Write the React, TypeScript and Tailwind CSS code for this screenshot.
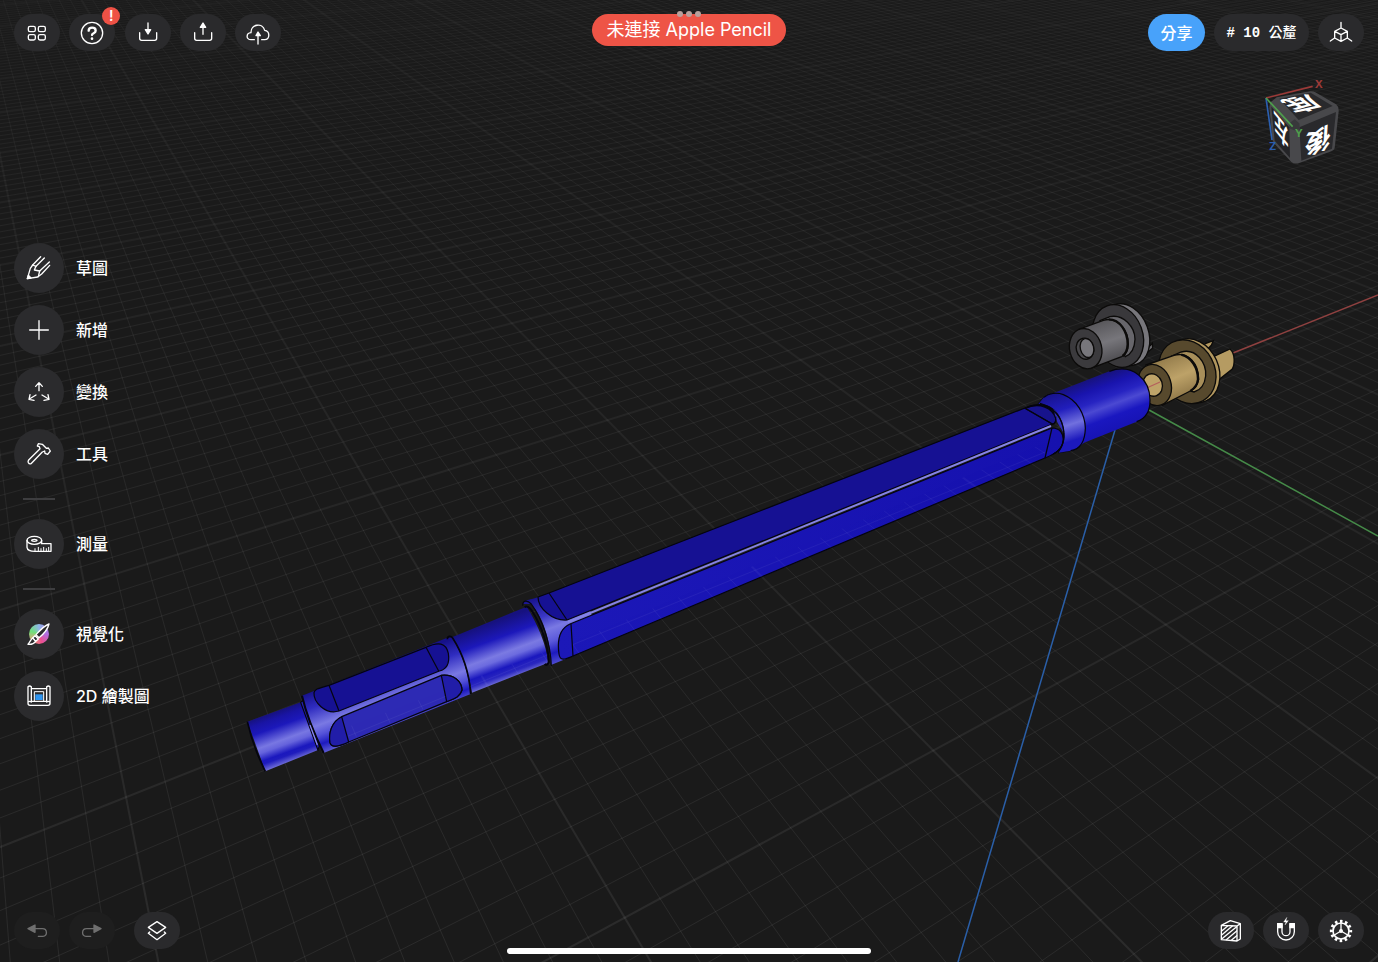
import React from "react";

type Line = { x1: number; y1: number; x2: number; y2: number };

// ground plane -> view. i and j count the major grid lines in each direction
function project(i: number, j: number) {
  const w = 1 + 0.09 * i - 0.1502 * j;
  return { x: (304.5 + 253.5 * i + 12.9 * j) / w, y: (376.7 - 24.3 * i + 42.5 * j) / w };
}

const VANISH_A = { x: -86, y: -283 };
const VANISH_B = { x: 2817, y: -270 };

function ray(from: { x: number; y: number }, to: { x: number; y: number }): Line {
  const dx = to.x - from.x;
  const dy = to.y - from.y;
  const k = 4000 / Math.hypot(dx, dy);
  return { x1: from.x, y1: from.y, x2: from.x + dx * k, y2: from.y + dy * k };
}

const minor: Line[] = [];
const major: Line[] = [];
for (let n = -20; n <= 200; n++) (n % 10 === 0 ? major : minor).push(ray(VANISH_A, project(n / 10, 0)));
for (let n = -150; n <= 45; n++) (n % 10 === 0 ? major : minor).push(ray(VANISH_B, project(0, n / 10)));

function Grid() {
  return (
    <g id="grid" fill="none">
      <g stroke="url(#minorFade)" strokeWidth="1">{minor.map((l, k) => <line key={k} {...l} />)}</g>
      <g stroke="url(#majorFade)" strokeWidth="2">{major.map((l, k) => <line key={k} {...l} />)}</g>
    </g>
  );
}

function Shades() {
  return (
    <defs>
      <linearGradient id="minorFade" gradientUnits="userSpaceOnUse" x1="0" y1="0" x2="0" y2="962">
        <stop offset="0" stopColor="#fff" stopOpacity="0.03" />
        <stop offset="0.3" stopColor="#fff" stopOpacity="0.055" />
        <stop offset="1" stopColor="#fff" stopOpacity="0.07" />
      </linearGradient>
      <linearGradient id="majorFade" gradientUnits="userSpaceOnUse" x1="0" y1="0" x2="0" y2="962">
        <stop offset="0" stopColor="#fff" stopOpacity="0.03" />
        <stop offset="1" stopColor="#fff" stopOpacity="0.075" />
      </linearGradient>
      <clipPath id="underside">
        <path d="M573 642L1045 443V458L573 656ZM348 727L446 690V700L348 740ZM470 680L548 650V662L470 692Z" />
      </clipPath>
      <linearGradient id="tube" gradientUnits="userSpaceOnUse" x1="52" y1="485" x2="106" y2="634">
        <stop offset="0" stopColor="#16117f" />
        <stop offset="0.12" stopColor="#1914a4" />
        <stop offset="0.28" stopColor="#1c18bb" />
        <stop offset="0.55" stopColor="#7877e2" />
        <stop offset="0.65" stopColor="#6563dc" />
        <stop offset="0.8" stopColor="#1b18be" />
        <stop offset="0.86" stopColor="#1f1cbd" />
        <stop offset="1" stopColor="#7472d8" />
      </linearGradient>
      <linearGradient id="grip" gradientUnits="userSpaceOnUse" x1="216" y1="405" x2="281" y2="579">
        <stop offset="0" stopColor="#16118a" />
        <stop offset="0.25" stopColor="#2f2cc0" />
        <stop offset="0.55" stopColor="#7a79e3" />
        <stop offset="0.7" stopColor="#5452d8" />
        <stop offset="0.85" stopColor="#1d1abf" />
        <stop offset="1" stopColor="#5d5bd3" />
      </linearGradient>
      <linearGradient id="neck" gradientUnits="userSpaceOnUse" x1="666" y1="232" x2="727" y2="398">
        <stop offset="0" stopColor="#16117f" />
        <stop offset="0.28" stopColor="#1c18bb" />
        <stop offset="0.55" stopColor="#7b7ae2" />
        <stop offset="0.64" stopColor="#6c6bdf" />
        <stop offset="0.79" stopColor="#1b18be" />
        <stop offset="0.9" stopColor="#2b28c0" />
        <stop offset="1" stopColor="#6f6dd6" />
      </linearGradient>
      <linearGradient id="neckRing" gradientUnits="userSpaceOnUse" x1="527" y1="600" x2="551" y2="665">
        <stop offset="0" stopColor="#17128c" />
        <stop offset="0.3" stopColor="#3936c4" />
        <stop offset="0.5" stopColor="#7a79e3" />
        <stop offset="0.68" stopColor="#5b59da" />
        <stop offset="0.85" stopColor="#1d1abf" />
        <stop offset="1" stopColor="#4d4bd0" />
      </linearGradient>
      <linearGradient id="cone" gradientUnits="userSpaceOnUse" x1="95" y1="312" x2="150" y2="483">
        <stop offset="0" stopColor="#17128c" />
        <stop offset="0.3" stopColor="#211ebd" />
        <stop offset="0.58" stopColor="#7170de" />
        <stop offset="0.85" stopColor="#1c19bd" />
        <stop offset="1" stopColor="#1c19bd" />
      </linearGradient>
      <linearGradient id="cap" gradientUnits="userSpaceOnUse" x1="210" y1="268" x2="270" y2="428">
        <stop offset="0" stopColor="#17127f" />
        <stop offset="0.2" stopColor="#1914ae" />
        <stop offset="0.4" stopColor="#2724c2" />
        <stop offset="0.55" stopColor="#4b49d2" />
        <stop offset="0.75" stopColor="#1a17c0" />
        <stop offset="1" stopColor="#1713b4" />
      </linearGradient>
      <linearGradient id="lowerFlat" gradientUnits="userSpaceOnUse" x1="560" y1="650" x2="1060" y2="440">
        <stop offset="0" stopColor="#1c18b8" />
        <stop offset="1" stopColor="#1611ae" />
      </linearGradient>
      <linearGradient id="steel" gradientUnits="userSpaceOnUse" x1="225" y1="100" x2="265" y2="220">
        <stop offset="0" stopColor="#58575b" />
        <stop offset="0.5" stopColor="#77767b" />
        <stop offset="1" stopColor="#4d4c50" />
      </linearGradient>
      <linearGradient id="brass" gradientUnits="userSpaceOnUse" x1="425" y1="210" x2="475" y2="330">
        <stop offset="0" stopColor="#967e4d" />
        <stop offset="0.5" stopColor="#bda268" />
        <stop offset="1" stopColor="#8f7748" />
      </linearGradient>
    </defs>
  );
}

function Pen() {
  return (
    <g stroke="#05050f" strokeLinejoin="round">
      <g transform="translate(230 560) scale(.33333)" strokeWidth="3.6">
        <path d="M52 485L212 427L266 569L106 634Z" fill="url(#tube)" stroke="none" />
        <path d="M52 485C62 530 84 590 106 634" fill="none" strokeWidth="5" />
        <path d="M212 427L222 420L268 558L264 571Z" fill="#2421b4" />
        <path d="M216 407L652 233L666 232C694 275 716 340 722 402L281 579C252 520 230 455 216 407Z" fill="url(#grip)" stroke="none" />
        <path d="M216 407C228 460 252 520 281 579" fill="none" strokeWidth="6" />
        <path d="M240 495L262 555" stroke="#8d8bea" fill="none" />
        <path d="M297 376L588 262C625 244 648 248 655 280C660 312 648 328 628 333L327 453C285 465 250 425 252 398C254 386 270 384 297 376Z" fill="#161193" />
        <path d="M297 376L327 453M588 262L626 333" fill="none" />
        <path d="M335 470L634 346C672 342 695 364 696 390C690 412 670 417 650 425L356 546C325 560 304 564 300 548C295 520 305 485 335 470Z" fill="#2d2ab4" />
        <path d="M335 470C305 485 295 520 300 548C304 564 325 560 356 546ZM634 346C672 342 695 364 696 390C690 412 670 417 650 425Z" fill="#211da8" />
        <path d="M666 232L890 140C925 195 950 260 955 308L726 398C716 335 694 275 666 232Z" fill="url(#neck)" stroke="none" />
        <path d="M652 238C652 228 662 226 668 234C696 278 718 340 722 402" fill="none" strokeWidth="5" />
      </g>
      {/* shoulder behind the long flats */}
      <path d="M523 604C524 600 528 600 532 599L549 594L590 610L600 640L573 656L551 665C551 640 542 615 531 604Z" fill="url(#neckRing)" stroke="none" />
      <g transform="translate(230 560) scale(.33333)" strokeWidth="3.6">
        <path d="M878 137C878 120 892 120 904 132C936 176 962 250 964 318" fill="none" />
        <path d="M884 142C890 136 900 142 908 156C936 200 955 260 956 305C955 315 948 316 944 312" fill="none" strokeWidth="6" />
      </g>
      <path d="M549 593L1025 408C1036 402 1050 406 1055 414C1056 419 1055 423 1050 425L567 620C552 621 538 608 538 597Z" fill="#161193" strokeWidth="1.2" />
      <path d="M549 593L567 620" fill="none" strokeWidth="1.2" />
      <path d="M570 624L1052 428C1060 428 1064 434 1063 441C1062 449 1057 453 1045 458L573 656C564 660 560 661 559 654C557 640 559 629 570 624Z" fill="url(#lowerFlat)" strokeWidth="1.2" />
      <path d="M571 624L573 656M1052 428L1045 458" fill="none" strokeWidth="1.2" />
      <path d="M568 622L1051 426" stroke="#8583e6" strokeWidth="2" />
      <g transform="translate(1020 290) scale(.33333)" strokeWidth="3.6">
        <path d="M55 342L72 322C85 310 110 306 130 314C170 330 195 370 196 415C195 455 180 478 152 482L116 488C130 470 136 448 132 420C125 370 95 340 55 342Z" fill="url(#cone)" />
        <path d="M15 355C60 335 98 355 107 385C108 395 106 400 97 402Z" fill="#17138c" />
        <path d="M107 382C112 404 122 410 132 432C132 404 122 378 100 356Z" fill="#302db8" stroke="none" />
        <path d="M97 402L15 355M97 404C108 400 108 392 107 380M20 352C80 325 128 370 132 428C134 462 120 482 100 492" fill="none" />
        <path d="M84 316C92 310 110 306 130 314C170 330 195 370 196 415C195 440 190 455 180 468L192 458L350 395C370 388 391 372 390 330C390 270 340 218 268 244Z" fill="url(#cap)" stroke="none" />
        <path d="M72 322C85 310 110 306 130 314C170 330 195 370 196 415C195 455 180 478 152 482L116 488C130 470 136 448 132 420C125 370 95 340 55 342Z" fill="url(#cone)" stroke="none" />
        <path d="M268 244C340 218 390 270 390 330C391 372 370 388 350 395M72 322C85 310 110 306 130 314C170 330 195 370 196 415C195 455 180 478 152 482M132 428C134 462 120 482 100 492M60 340C98 350 128 380 132 428" fill="none" />
      </g>
      {/* grid showing through where the body dips under the plane */}
      <g clipPath="url(#underside)" stroke="none" opacity="0.8"><use href="#grid" /></g>
    </g>
  );
}

function Couplers() {
  return (
    <g transform="translate(1020 290) scale(.33333)" stroke="#0c0b0a" strokeWidth="4">
      {/* steel */}
      <path d="M378 180L397 160L398 174L385 185Z" fill="#6d6c70" />
      <ellipse cx="316" cy="134" rx="70" ry="95" transform="rotate(-20 316 134)" fill="#77767b" />
      <ellipse cx="294" cy="138" rx="74" ry="96" transform="rotate(-20 294 138)" fill="#39383b" />
      <path d="M240 92L270 80C310 72 345 110 345 148C344 176 335 192 316 200Z" fill="#67666b" />
      <path d="M176 118L250 91C292 78 325 120 325 163C324 184 316 195 305 200L212 235Z" fill="url(#steel)" />
      <path d="M266 88C300 88 323 125 323 163C322 184 316 192 308 198" fill="none" strokeWidth="7" />
      <ellipse cx="197" cy="176" rx="48" ry="61" transform="rotate(-14 197 176)" fill="#3b3a3d" />
      <ellipse cx="195" cy="176" rx="26" ry="32" transform="rotate(-14 195 176)" fill="#48474a" />
      <ellipse cx="201" cy="174" rx="20" ry="29" transform="rotate(-14 201 174)" fill="#77767b" />
      {/* brass */}
      <path d="M546 166L558 160L580 152L574 166L560 180Z" fill="#b3985f" />
      <path d="M580 200L630 177C646 190 645 225 636 238L598 268Z" fill="#b59b62" />
      <ellipse cx="518" cy="242" rx="78" ry="99" transform="rotate(-24 518 242)" fill="#b0965e" />
      <ellipse cx="502" cy="245" rx="82" ry="99" transform="rotate(-28 502 245)" fill="#57492d" />
      <path d="M455 198L484 186C528 174 560 218 557 258C554 286 544 300 522 306L500 300Z" fill="#a88f5a" />
      <path d="M378 225L462 196C505 184 536 222 536 268C532 290 522 298 505 306L428 345Z" fill="url(#brass)" />
      <path d="M484 194C514 202 534 232 534 268C532 286 526 294 512 302" fill="none" strokeWidth="7" />
      <ellipse cx="404" cy="285" rx="49" ry="63" transform="rotate(-18 404 285)" fill="#57492d" />
      <ellipse cx="398" cy="285" rx="29" ry="34" transform="rotate(-18 398 285)" fill="#bfa469" />
      <path d="M380 294L420 276" stroke="#b5605c" />
    </g>
  );
}

function Scene() {
  return (
    <svg className="absolute inset-0 h-full w-full" viewBox="0 0 1378 962" preserveAspectRatio="xMidYMid slice" aria-hidden="true">
      <Shades />
      <Grid />
      <g strokeWidth="1.5" fill="none">
        <path d="M1233 353L1378 295" stroke="#8f4140" />
        <path d="M1149 410L1378 536" stroke="#458a48" />
        <path d="M1115 430L958 962" stroke="#2a5fa8" />
      </g>
      <Couplers />
      <Pen />
    </svg>
  );
}

function ViewCube() {
  return (
    <svg className="h-[90px] w-[80px] overflow-visible" viewBox="390 230 240 270" role="img" aria-label="視角方塊">
      <path d="M420 310L440 294L540 276Q548 274 556 279L618 315Q627 322 626 336L614 446Q612 453 604 456L510 490Q494 496 484 488L434 434Q428 426 427 418L418 325Z" fill="#48484b" />
      <path d="M448 298L542 280L608 320L506 362Z" fill="#29292c" />
      <path d="M424 322L478 384L480 476L434 424Z" fill="#242427" />
      <path d="M508 384L618 338L606 448L514 484Z" fill="#29292c" />
      <path d="M478 372L494 360L508 372L510 388L498 394L480 388Z" fill="#38383b" />
      <g fill="#fff" className="font-['Noto_Sans_CJK_TC',sans-serif]" fontSize="84" fontWeight="700">
        <text transform="matrix(-.94 .4 .06 -.98 600 448)" x="0" y="72">後</text>
        <text transform="matrix(-.52 -.64 -.06 -.98 478 462)" x="0" y="74">左</text>
        <text transform="matrix(-1.1 .24 -.72 -.54 590 324)" x="0" y="70">底</text>
      </g>
      <g strokeWidth="5" fill="none">
        <path d="M408 296L548 261" stroke="#9c3a38" />
        <path d="M408 296L426 422" stroke="#2b5fb0" />
        <path d="M408 296L488 382" stroke="#4f9e4c" />
      </g>
      <g className="font-['Inter',sans-serif]" fontSize="33" fontWeight="700">
        <text x="554" y="267" fill="#9c3a38">X</text>
        <text x="494" y="413" fill="#4f9e4c">Y</text>
        <text x="417" y="451" fill="#2b5fb0">Z</text>
      </g>
    </svg>
  );
}

function Icon({ children, w = 4 }: { children: React.ReactNode; w?: number }) {
  return (
    <svg className="relative h-6 w-6 overflow-visible" viewBox="0 0 72 72" fill="none" stroke="currentColor" strokeWidth={w} strokeLinecap="round" strokeLinejoin="round" aria-hidden="true">
      {children}
    </svg>
  );
}

const GridIcon = () => (
  <Icon>
    <rect x="10" y="16" width="21" height="16" rx="5" /><rect x="40" y="16" width="21" height="16" rx="5" />
    <rect x="10" y="41" width="21" height="16" rx="5" /><rect x="40" y="41" width="21" height="16" rx="5" />
  </Icon>
);
const HelpIcon = () => (
  <Icon>
    <circle cx="36" cy="36" r="32" />
    <path d="M26 29C26 17 47 17 47 29C47 37 36 36 36 42" strokeWidth="7" /><circle cx="36" cy="53" r="4" fill="currentColor" stroke="none" />
  </Icon>
);
const TRAY = "M11 35V52Q11 58 17 58H56Q62 58 62 52V35";
const ImportIcon = () => <Icon><path d={TRAY} /><path d="M36 6V28" /><path d="M28 26H44L36 39Z" fill="currentColor" /></Icon>;
const ExportIcon = () => <Icon><path d={TRAY} /><path d="M36 20V40" /><path d="M28 19H44L36 6Z" fill="currentColor" /></Icon>;
const CloudIcon = () => (
  <Icon>
    <path d="M25 56H15C-1 56 0 36 15 35C14 9 50 4 56 28C73 30 72 56 56 56H47" />
    <path d="M36 44V69" /><path d="M30 44H43L36 33Z" fill="currentColor" />
  </Icon>
);
const AxesIcon = () => (
  <Icon>
    <path d="M36 21L55 31V51L36 61L17 51V31ZM17 31L36 41L55 31M36 41V61M36 21V4M17 51L4 60M55 51L68 60" />
  </Icon>
);
const PencilIcon = () => (
  <Icon>
    <path d="M41 2L17 27L10 37L1 68L32 63L44 54L68 28" /><path d="M52 6L27 31L22 42L38 45L34 62" /><path d="M67 18L38 45M17 27L27 31" />
    <path d="M1 68L4 58L12 66Z" fill="currentColor" />
  </Icon>
);
const PlusIcon = () => <Icon><path d="M36 8V64M8 36H64" /></Icon>;
const TransformIcon = () => (
  <Icon>
    <path d="M36 9V32M26 19L36 8L46 19M27 45L7 57M9 44L6 58L21 61M45 45L65 57M63 44L66 58L51 61" />
  </Icon>
);
const HammerIcon = () => (
  <Icon><path d="M31 12L34 5L46 7L58 19L64 18L70 27L62 37L54 34L53 27L46 30L12 65Q7 67 4 62Q2 58 5 54L39 20L37 14Z" /></Icon>
);
const TapeIcon = () => (
  <Icon>
    <ellipse cx="22" cy="25" rx="22" ry="12" /><ellipse cx="22" cy="25" rx="8" ry="3" />
    <path d="M0 25V46C1 54 12 58 24 58H72V35H43M44 25V35" /><path d="M24 57V50M34 57V46M42 57V50M50 57V46M58 57V50M65 57V46" strokeWidth="3" />
  </Icon>
);
const BrushIcon = () => (
  <>
    <span className="absolute h-5 w-5 rounded-full bg-[conic-gradient(#8fb4e8,#b06be0_25%,#ee4f8e_45%,#e8a07a_62%,#6fe07a_80%,#8fb4e8)]" />
    <Icon>
      <path d="M66 6C56 9 38 26 27 38L36 47C50 36 63 19 66 6Z" fill="#2b2b2d" />
      <path d="M24 41L34 51L26 58L17 48Z" fill="#2b2b2d" />
      <path d="M17 48L26 58C20 66 10 68 3 67C9 61 10 53 17 48Z" fill="#2b2b2d" />
    </Icon>
  </>
);
const DrawingIcon = () => (
  <Icon>
    <path d="M3 8Q8 4 13 8V52H59V8Q64 4 69 8V58Q69 64 63 64H9Q3 64 3 58ZM13 14H59M3 54Q8 50 13 54M59 54Q64 50 69 54" />
    <path d="M22 52V23H50V52" strokeWidth="3" /><rect x="25" y="31" width="22" height="17" fill="#2f95f0" stroke="none" />
  </Icon>
);
const UndoIcon = () => <Icon><path d="M30 29H52C68 29 68 52 54 52H40" /><path d="M9 29L30 18V40Z" fill="currentColor" /></Icon>;
const RedoIcon = () => <Icon><path d="M42 29H20C4 29 4 52 18 52H32" /><path d="M63 29L42 18V40Z" fill="currentColor" /></Icon>;
const LayersIcon = () => <Icon><path d="M36 8L62 25L36 43L10 25ZM14 39L10 43L36 62L62 43L58 39" /></Icon>;
const SectionIcon = () => (
  <Icon>
    <path d="M7 19L34 5L64 14V60L54 66L7 62ZM7 19L54 21V66M54 21L64 14" />
    <path d="M8 36L26 21M8 48L40 21M8 60L53 23M22 62L53 36M38 63L53 50" />
  </Icon>
);
const MagnetIcon = () => (
  <Icon>
    <path d="M11 14H24V38A12 12 0 0 0 48 38V14H61V38A25 25 0 0 1 11 38Z" /><path d="M11 14H24V26H11ZM48 14H61V26H48Z" fill="currentColor" />
    <path d="M38 -4L29 9H36L33 18L43 5H36Z" fill="currentColor" strokeWidth="1" />
  </Icon>
);
const GearIcon = () => (
  <Icon>
    <circle cx="36" cy="36" r="24" strokeWidth="5" /><circle cx="36" cy="36" r="29" strokeWidth="9" strokeLinecap="butt" pathLength="120" strokeDasharray="5 5" strokeDashoffset="2.5" />
    <path d="M36 36V12M36 36L16 48M36 36L56 48" /><circle cx="36" cy="36" r="4" fill="currentColor" />
  </Icon>
);

const PILL = "flex h-[37px] items-center justify-center rounded-full bg-[#2a2a2c] text-white";

function PillButton({ label, disabled, children }: { label: string; disabled?: boolean; children: React.ReactNode }) {
  return (
    <button type="button" aria-label={label} disabled={disabled} className={`${PILL} relative w-[46px] disabled:bg-[#1e1e1e] disabled:text-[#6f6f6f]`}>
      {children}
    </button>
  );
}

const TOOLS: ({ label: string; icon: React.FC } | null)[] = [
  { label: "草圖", icon: PencilIcon },
  { label: "新增", icon: PlusIcon },
  { label: "變換", icon: TransformIcon },
  { label: "工具", icon: HammerIcon },
  null,
  { label: "測量", icon: TapeIcon },
  null,
  { label: "視覺化", icon: BrushIcon },
  { label: "2D 繪製圖", icon: DrawingIcon },
];

function Toolbar() {
  return (
    <nav className="flex flex-col items-start gap-3">
      {TOOLS.map((t, k) =>
        t ? (
          <button key={t.label} type="button" className="flex items-center gap-3 text-base font-medium text-white">
            <span className="relative flex h-[50px] w-[50px] items-center justify-center rounded-full bg-[#2b2b2d]"><t.icon /></span>
            {t.label}
          </button>
        ) : (
          <hr key={k} className="my-[7px] ml-[9px] h-[2px] w-8 border-0 bg-[#3d3d3f]" />
        )
      )}
    </nav>
  );
}

export default function App() {
  return (
    <div lang="zh-Hant" className="relative flex min-h-screen flex-col overflow-hidden bg-[#1a1a1a] font-['Inter','Noto_Sans_CJK_TC',sans-serif]">
      <Scene />
      <header className="relative grid grid-cols-[1fr_auto_1fr] items-start px-[14px] pt-[14px]">
        <div className="flex w-[267px] justify-between">
          <PillButton label="設計"><GridIcon /></PillButton>
          <PillButton label="說明">
            <HelpIcon />
            <span className="absolute -right-[5px] -top-[7px] flex h-[18px] w-[18px] items-center justify-center rounded-full bg-[#ee5145] text-sm font-semibold">!</span>
          </PillButton>
          <PillButton label="匯入"><ImportIcon /></PillButton>
          <PillButton label="匯出"><ExportIcon /></PillButton>
          <PillButton label="同步"><CloudIcon /></PillButton>
        </div>
        <div className="relative flex h-8 items-center rounded-full bg-[#ee5446] px-[15px] text-lg text-white" role="status">
          未連接 Apple Pencil
          <span className="absolute inset-x-0 -top-[3px] flex justify-center gap-[3px]">
            <i className="h-[6px] w-[6px] rounded-full bg-[#b9a09c]" /><i className="h-[6px] w-[6px] rounded-full bg-[#b9a09c]" /><i className="h-[6px] w-[6px] rounded-full bg-[#b9a09c]" />
          </span>
        </div>
        <div className="relative flex justify-end gap-[9px]">
          <button type="button" className="h-[37px] w-[57px] rounded-full bg-[#48a2fa] text-base font-medium text-white">分享</button>
          <button type="button" className={`${PILL} w-[95px] whitespace-pre font-['Liberation_Mono','Noto_Sans_CJK_TC',monospace] text-sm font-bold`}># 10 <span className="font-medium">公釐</span></button>
          <PillButton label="視圖"><AxesIcon /></PillButton>
          <div className="absolute right-[24px] top-[62px]"><ViewCube /></div>
        </div>
      </header>
      <main className="relative flex flex-1 items-center px-[14px]">
        <Toolbar />
      </main>
      <footer className="relative grid grid-cols-[1fr_auto_1fr] items-end px-[14px] pb-2">
        <div className="mb-[5px] flex gap-[9px]">
          <PillButton label="復原" disabled><UndoIcon /></PillButton>
          <PillButton label="重做" disabled><RedoIcon /></PillButton>
          <div className="ml-[10px]"><PillButton label="圖層"><LayersIcon /></PillButton></div>
        </div>
        <div className="h-[6px] w-[364px] rounded-full bg-white" />
        <div className="mb-[5px] flex justify-end gap-[9px]">
          <PillButton label="剖面"><SectionIcon /></PillButton>
          <PillButton label="吸附"><MagnetIcon /></PillButton>
          <PillButton label="設定"><GearIcon /></PillButton>
        </div>
      </footer>
    </div>
  );
}
